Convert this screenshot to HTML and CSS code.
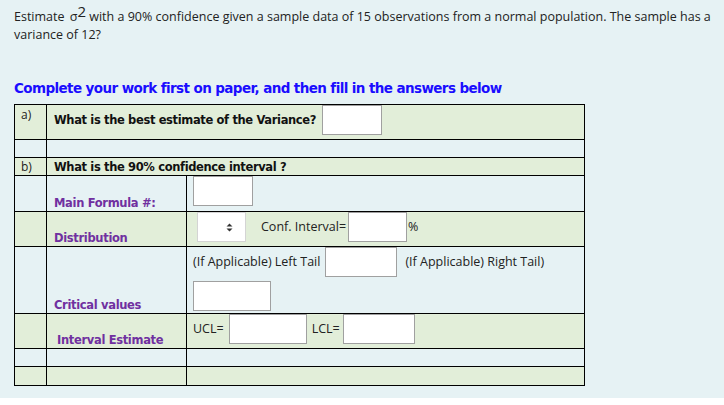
FILE: index.html
```html
<!DOCTYPE html>
<html>
<head>
<meta charset="utf-8">
<link rel="stylesheet" href="styles.css">
</head>
<body>
<div class="page">
  <p class="prompt">Estimate <span class="sym">σ<sup>2</sup></span> with a 90% confidence given a sample data of 15 observations from a normal population. The sample has a<br>variance of 12?</p>
  <h2 class="heading">Complete your work first on paper, and then fill in the answers below</h2>
  <table class="qtable">
    <colgroup><col class="c1"><col class="c2"><col class="c3"></colgroup>
    <tr class="green h35">
      <td class="num">a)</td>
      <td colspan="2" class="q q-a"><span class="qtext">What is the best estimate of the Variance?</span><input class="box w60" type="text"></td>
    </tr>
    <tr class="h18"><td></td><td colspan="2"></td></tr>
    <tr class="green h18">
      <td class="num num-b">b)</td>
      <td colspan="2" class="q q-b">What is the 90% confidence interval ?</td>
    </tr>
    <tr class="h36">
      <td></td>
      <td class="label">Main Formula #:</td>
      <td class="ans"><input class="box w60" type="text"></td>
    </tr>
    <tr class="green h35">
      <td></td>
      <td class="label">Distribution</td>
      <td class="ans">
        <div class="line">
          <span class="select"><svg width="7" height="9" viewBox="0 0 7 9"><path d="M3.5 0.5 L6.5 3.5 L0.5 3.5 Z M0.5 5.5 L6.5 5.5 L3.5 8.5 Z" fill="#333"/></svg></span>
          <span class="txt">Conf. Interval=</span><input class="box w59 tight" type="text"><span class="txt">%</span>
        </div>
      </td>
    </tr>
    <tr class="h67">
      <td></td>
      <td class="label">Critical values</td>
      <td class="ans">
        <div class="line">
          <span class="txt">(If Applicable) Left Tail</span><input class="box w72 sp" type="text"><span class="txt far">(If Applicable) Right Tail)</span>
        </div>
        <div class="line second"><input class="box w78" type="text"></div>
      </td>
    </tr>
    <tr class="green h35">
      <td></td>
      <td class="label label-ie">Interval Estimate</td>
      <td class="ans">
        <div class="line">
          <span class="txt">UCL=</span><input class="box w78 sp" type="text"><span class="txt sp">LCL=</span><input class="box w72 sp2" type="text">
        </div>
      </td>
    </tr>
    <tr class="h18"><td></td><td></td><td></td></tr>
    <tr class="green h19"><td></td><td></td><td></td></tr>
  </table>
</div>
</body>
</html>
```

FILE: styles.css
```css
html, body {
  margin: 0;
  background: #ffffff;
}

.page {
  background: #e6f2f4;
  height: 398px;
  box-sizing: border-box;
  padding: 8px 0 0 14px;
  font-family: "Open Sans", "Liberation Sans", sans-serif;
  color: #222222;
}

.prompt {
  margin: 0;
  font-size: 12.5px;
  line-height: 18px;
}

.sym {
  margin-left: 2px;
}

.sym sup {
  font-size: 15px;
  line-height: 0;
  vertical-align: 4px;
}

.heading {
  margin: 34px 0 6px 0;
  font-family: "DejaVu Sans", sans-serif;
  font-size: 13.5px;
  line-height: 20px;
  font-weight: bold;
  color: #1a0dff;
  letter-spacing: -0.6px;
}

.qtable {
  border-collapse: collapse;
  table-layout: fixed;
  width: 570px;
}

.c1 { width: 32px; }
.c2 { width: 140px; }
.c3 { width: 398px; }

.qtable td {
  border: 1px solid #000000;
  padding: 0;
  vertical-align: top;
}

.green td { background: #e2eed9; }

.h35 { height: 35px; }
.h18 { height: 18px; }
.h19 { height: 19px; }
.h36 { height: 36px; }
.h67 { height: 67px; }

.qtable td.num {
  padding: 2px 0 0 6px;
  font-size: 12px;
  line-height: 16px;
}

.qtable td.num-b {
  padding-top: 0;
  vertical-align: middle;
}

.q {
  font-family: "DejaVu Sans", sans-serif;
  font-weight: bold;
  font-size: 11.5px;
  color: #111111;
  letter-spacing: -0.36px;
}

.qtable td.q-a {
  padding: 0 0 0 7px;
}

.q-a .qtext {
  display: inline-block;
  vertical-align: middle;
  margin-right: 6px;
}

.qtable td.q-b {
  padding: 0 0 0 7px;
  vertical-align: middle;
  line-height: 16px;
}

.qtable td.label {
  vertical-align: bottom;
  padding: 0 0 0 7px;
  font-family: "DejaVu Sans", sans-serif;
  font-weight: bold;
  font-size: 11.5px;
  letter-spacing: -0.33px;
  line-height: 15px;
  color: #7030a0;
}

.qtable td.label-ie {
  padding-left: 10px;
}

.qtable td.ans {
  padding: 0 0 0 6px;
  font-size: 12.5px;
}

.box {
  display: inline-block;
  vertical-align: middle;
  box-sizing: border-box;
  height: 30px;
  margin: 0;
  padding: 0;
  border: 1px solid #a0a0a0;
  background: #ffffff;
  font: inherit;
}

.w59 { width: 59px; }
.w60 { width: 60px; }
.w72 { width: 72px; }
.w78 { width: 78px; }

.line {
  display: flex;
  align-items: center;
  height: 30px;
}

.second {
  margin-top: 4px;
}

.txt {
  white-space: nowrap;
  line-height: 18px;
}

.sp { margin-left: 5px; }
.sp2 { margin-left: 3px; }
.tight { margin-left: 2px; margin-right: 1px; }
.far { margin-left: 8px; }

.select {
  display: flex;
  align-items: center;
  justify-content: flex-end;
  box-sizing: border-box;
  width: 49px;
  height: 30px;
  margin: 0 15px 0 4px;
  padding-right: 12px;
  background: #ffffff;
  border: 1px solid #d4d4d4;
}
```
